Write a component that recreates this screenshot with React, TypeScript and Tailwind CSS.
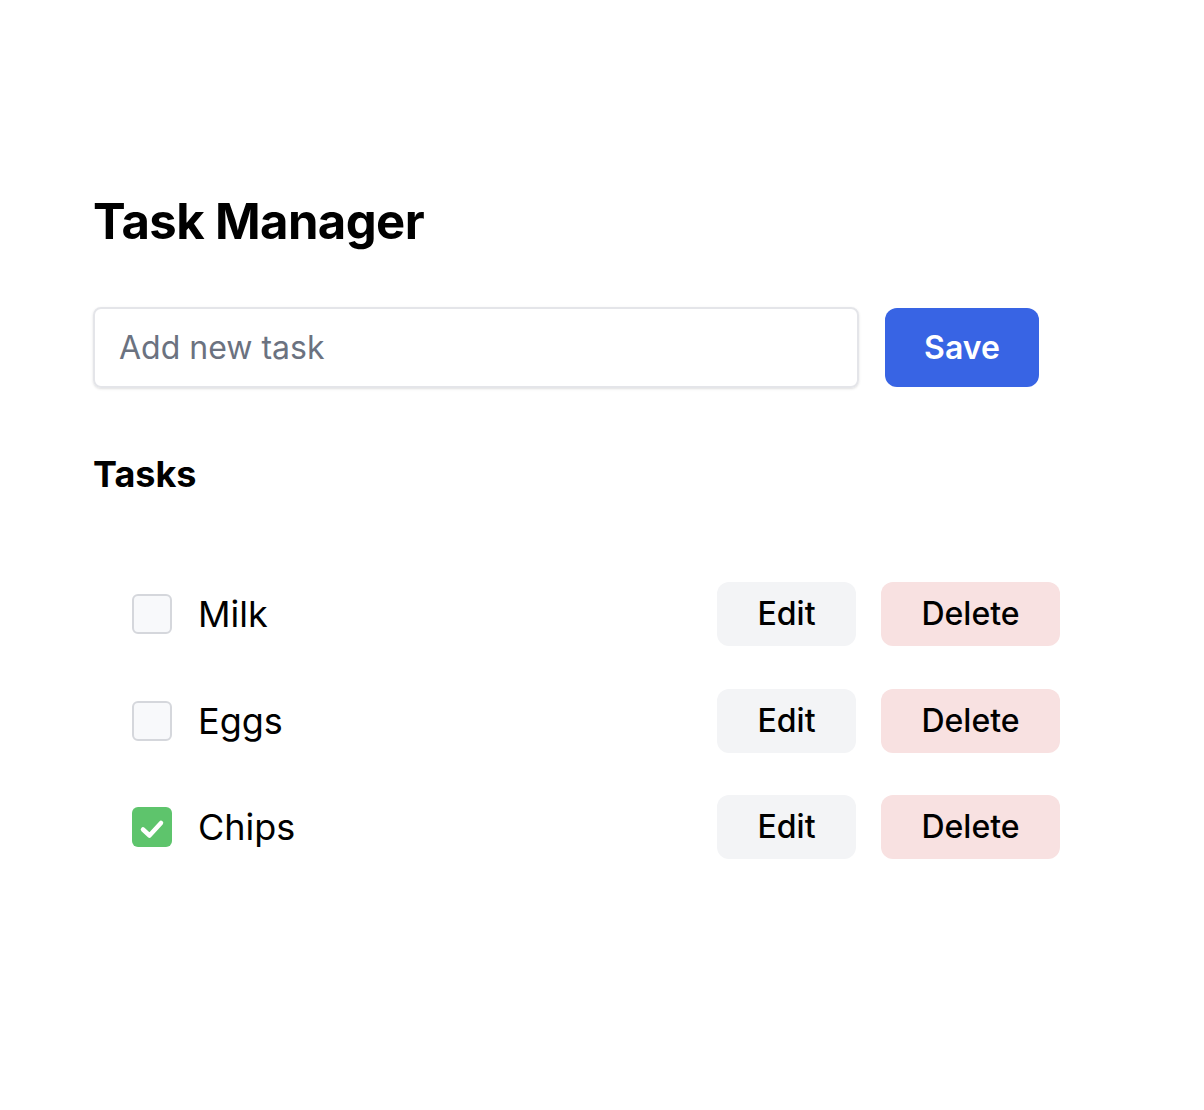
import { useState } from 'react';

interface Task {
  id: number;
  title: string;
  done: boolean;
}

const initialTasks: Task[] = [
  { id: 1, title: 'Milk', done: false },
  { id: 2, title: 'Eggs', done: false },
  { id: 3, title: 'Chips', done: true },
];

const CheckBox = ({ checked, onToggle }: { checked: boolean; onToggle: () => void }) => (
  <button
    type="button"
    onClick={onToggle}
    className={
      checked
        ? 'w-10 h-10 rounded-[6px] bg-[#5ec46c] flex items-center justify-center shrink-0'
        : 'w-10 h-10 rounded-[6px] border-2 border-[#d5d7dc] bg-[#f8f9fb] shrink-0'
    }
  >
    {checked && (
      <svg width="40" height="40" viewBox="0 0 40 40" fill="none">
        <path
          d="M11 22.5L17.5 28.5L29 16"
          stroke="white"
          strokeWidth="4.5"
          strokeLinecap="round"
          strokeLinejoin="round"
        />
      </svg>
    )}
  </button>
);

const App = () => {
  const [tasks, setTasks] = useState<Task[]>(initialTasks);
  const [newTask, setNewTask] = useState('');

  const toggle = (id: number) =>
    setTasks(tasks.map((t) => (t.id === id ? { ...t, done: !t.done } : t)));

  const save = () => {
    if (!newTask.trim()) return;
    setTasks([...tasks, { id: Date.now(), title: newTask.trim(), done: false }]);
    setNewTask('');
  };

  return (
    <div className="min-h-[1110px] bg-white pl-[93px] pt-[197px] font-['Inter',sans-serif] text-black">
      <h1 className="text-[49px] leading-none font-bold tracking-[-0.6px]">Task Manager</h1>

      <div className="flex items-center gap-[26px] mt-[61px]">
        <input
          value={newTask}
          onChange={(e) => setNewTask(e.target.value)}
          placeholder="Add new task"
          className="w-[766px] h-[81px] rounded-[8px] border-2 border-[#e4e5e9] shadow-sm px-6 text-[32px] placeholder:text-[#6b7280] outline-none"
        />
        <button
          type="button"
          onClick={save}
          className="w-[154px] h-[79px] rounded-[12px] bg-[#3864e4] text-white text-[32px] font-semibold"
        >
          Save
        </button>
      </div>

      <h2 className="text-[36px] leading-none font-bold mt-[68px]">Tasks</h2>

      <ul className="flex flex-col gap-[42.5px] mt-[90px] pl-[39px] w-[967px]">
        {tasks.map((task) => (
          <li key={task.id} className="flex items-center h-16">
            <CheckBox checked={task.done} onToggle={() => toggle(task.id)} />
            <span className="ml-[26px] text-[36px] flex-1">{task.title}</span>
            <button
              type="button"
              className="w-[139px] h-16 rounded-[12px] bg-[#f3f4f6] text-[32px] font-medium"
            >
              Edit
            </button>
            <button
              type="button"
              className="w-[179px] h-16 ml-[25px] rounded-[12px] bg-[#f8e1e1] text-[32px] font-medium"
            >
              Delete
            </button>
          </li>
        ))}
      </ul>
    </div>
  );
};

export default App;
